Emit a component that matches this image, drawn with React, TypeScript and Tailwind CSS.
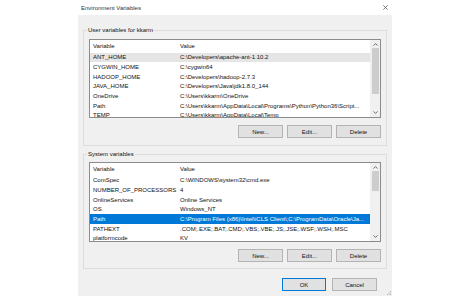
import React from 'react';

type Row = { name: string; value: string; state?: 'selected' | 'inactive' };

const userVars: Row[] = [
  { name: 'ANT_HOME', value: 'C:\\Developers\\apache-ant-1.10.2', state: 'inactive' },
  { name: 'CYGWIN_HOME', value: 'C:\\cygwin64' },
  { name: 'HADOOP_HOME', value: 'C:\\Developers\\hadoop-2.7.3' },
  { name: 'JAVA_HOME', value: 'C:\\Developers\\Java\\jdk1.8.0_144' },
  { name: 'OneDrive', value: 'C:\\Users\\kkarm\\OneDrive' },
  { name: 'Path', value: 'C:\\Users\\kkarm\\AppData\\Local\\Programs\\Python\\Python36\\Script...' },
  { name: 'TEMP', value: 'C:\\Users\\kkarm\\AppData\\Local\\Temp' },
];

const systemVars: Row[] = [
  { name: 'ComSpec', value: 'C:\\WINDOWS\\system32\\cmd.exe' },
  { name: 'NUMBER_OF_PROCESSORS', value: '4' },
  { name: 'OnlineServices', value: 'Online Services' },
  { name: 'OS', value: 'Windows_NT' },
  { name: 'Path', value: 'C:\\Program Files (x86)\\Intel\\iCLS Client\\;C:\\ProgramData\\Oracle\\Ja...', state: 'selected' },
  { name: 'PATHEXT', value: '.COM;.EXE;.BAT;.CMD;.VBS;.VBE;.JS;.JSE;.WSF;.WSH;.MSC' },
  { name: 'platformcode', value: 'KV' },
];

const Chevron = ({ up }: { up?: boolean }) => (
  <svg width="5" height="3" viewBox="0 0 5 3" className="text-[#606060]">
    <polyline
      points={up ? '0.5,2.6 2.5,0.6 4.5,2.6' : '0.5,0.4 2.5,2.4 4.5,0.4'}
      fill="none"
      stroke="currentColor"
      strokeWidth="0.9"
    />
  </svg>
);

const Button = ({ label, primary }: { label: string; primary?: boolean }) => (
  <button
    className={
      primary
        ? 'w-[44px] h-[13px] bg-[#e1e1e1] border border-[#0078d7] flex items-center justify-center'
        : 'w-[45px] h-[13px] bg-[#e1e1e1] border border-[#b4b4b4] flex items-center justify-center'
    }
  >
    {label}
  </button>
);

const ListBox = ({
  rows,
  height,
  thumbHeight,
}: {
  rows: Row[];
  height: string;
  thumbHeight: string;
}) => (
  <div className={`${height} border border-[#8c8c8c] bg-white flex overflow-hidden`}>
    <div className="flex-1 min-w-0 flex flex-col">
      {/* Column headers */}
      <div className="h-[12.5px] shrink-0 flex items-center">
        <div className="w-[87px] pl-[3px]">Variable</div>
        <div className="pl-[3px]">Value</div>
      </div>
      {rows.map((r) => (
        <div
          key={r.name}
          className={
            r.state === 'selected'
              ? 'h-[9.67px] shrink-0 flex items-center bg-[#0078d7] text-white'
              : r.state === 'inactive'
              ? 'h-[9.67px] shrink-0 flex items-center bg-[#e5e5e5]'
              : 'h-[9.67px] shrink-0 flex items-center'
          }
        >
          <div className="w-[87px] shrink-0 pl-[3px] whitespace-nowrap">{r.name}</div>
          <div className="flex-1 min-w-0 pl-[3px] whitespace-nowrap">{r.value}</div>
        </div>
      ))}
    </div>
    {/* Scrollbar */}
    <div className="w-[10px] shrink-0 bg-[#f0f0f0] flex flex-col items-center">
      <div className="h-[8px] flex items-center justify-center">
        <Chevron up />
      </div>
      <div className={`${thumbHeight} w-[7px] bg-[#cdcdcd]`} />
      <div className="flex-1" />
      <div className="h-[9px] flex items-center justify-center">
        <Chevron />
      </div>
    </div>
  </div>
);

const GroupBox = ({
  label,
  className,
  children,
}: {
  label: string;
  className: string;
  children: React.ReactNode;
}) => (
  <div className={`relative border border-[#dcdcdc] px-[5px] ${className}`}>
    <span className="absolute left-[3px] top-[-5px] leading-[8px] px-[1px] bg-[#f0f0f0]">{label}</span>
    {children}
  </div>
);

export default function App() {
  return (
    <div className="w-[474px] h-[298px] bg-white flex font-['Liberation_Sans',Arial,sans-serif] text-[6px] leading-[8px] text-[#111]">
      <div className="ml-[78px] w-[314px] h-[296px] flex flex-col">
        {/* Title bar */}
        <div className="h-[15px] shrink-0 bg-white flex items-center justify-between pl-[3px] pr-[4px]">
          <span className="text-[#333]">Environment Variables</span>
          <svg width="5" height="5" viewBox="0 0 5 5" className="text-[#444]">
            <path d="M0.3 0.3 L4.7 4.7 M4.7 0.3 L0.3 4.7" stroke="currentColor" strokeWidth="0.7" />
          </svg>
        </div>

        {/* Body */}
        <div className="relative flex-1 bg-[#f0f0f0] px-[5px] flex flex-col">
          <GroupBox label="User variables for kkarm" className="mt-[15px] pt-[8px] pb-[7px]">
            <ListBox rows={userVars} height="h-[79px]" thumbHeight="h-[46px]" />
            <div className="mt-[7px] flex justify-end gap-[4px]">
              <Button label="New..." />
              <Button label="Edit..." />
              <Button label="Delete" />
            </div>
          </GroupBox>

          <GroupBox label="System variables" className="mt-[8px] pt-[7px] pb-[6px]">
            <ListBox rows={systemVars} height="h-[80px]" thumbHeight="h-[20px]" />
            <div className="mt-[7px] flex justify-end gap-[4px]">
              <Button label="New..." />
              <Button label="Edit..." />
              <Button label="Delete" />
            </div>
          </GroupBox>

          <div className="mt-[9px] pr-[10px] flex justify-end gap-[6px]">
            <Button label="OK" primary />
            <Button label="Cancel" />
          </div>

          {/* Resize grip */}
          <svg width="4" height="4" viewBox="0 0 4 4" className="absolute right-[1px] bottom-[1px] text-[#b8b8b8]">
            <rect x="3" y="0" width="1" height="1" fill="currentColor" />
            <rect x="1.5" y="1.5" width="1" height="1" fill="currentColor" />
            <rect x="3" y="1.5" width="1" height="1" fill="currentColor" />
            <rect x="0" y="3" width="1" height="1" fill="currentColor" />
            <rect x="1.5" y="3" width="1" height="1" fill="currentColor" />
            <rect x="3" y="3" width="1" height="1" fill="currentColor" />
          </svg>
        </div>
      </div>
    </div>
  );
}
